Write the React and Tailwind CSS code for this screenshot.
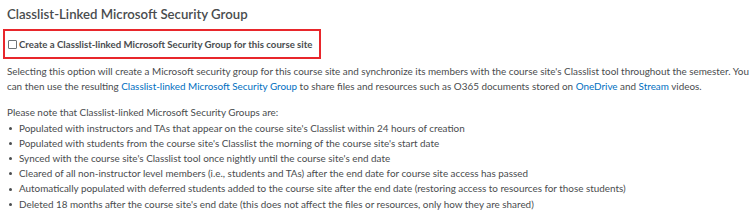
const bullets = [
  "Populated with instructors and TAs that appear on the course site's Classlist within 24 hours of creation",
  "Populated with students from the course site's Classlist the morning of the course site's start date",
  "Synced with the course site's Classlist tool once nightly until the course site's end date",
  'Cleared of all non-instructor level members (i.e., students and TAs) after the end date for course site access has passed',
  'Automatically populated with deferred students added to the course site after the end date (restoring access to resources for those students)',
  "Deleted 18 months after the course site's end date (this does not affect the files or resources, only how they are shared)",
]

export default function App() {
  return (
    <div className="h-[213px] overflow-hidden bg-white pl-[7px] pt-[3px] font-['Lato',sans-serif] text-[#494c4e]">
      <h2 className="text-[13.2px] font-semibold leading-[22px] text-[#494c4e]">
        Classlist-Linked Microsoft Security Group
      </h2>
      <div className="mt-[4px] -ml-[4px] w-[318px] border-2 border-[#e8262b] px-[3px] py-[7px]">
        <label className="flex items-center gap-[2px] text-[9.65px] font-bold leading-[12px] whitespace-nowrap">
          <span className="inline-block h-[9px] w-[9px] shrink-0 rounded-[1px] border border-[#6e7376] bg-white" />
          Create a Classlist-linked Microsoft Security Group for this course site
        </label>
      </div>
      <p className="mt-[5px] text-[9.9px] leading-[15.2px]">
        Selecting this option will create a Microsoft security group for this course site and synchronize its members with the course site's Classlist tool throughout the semester. You
        <br />
        can then use the resulting{' '}
        <a className="text-[#006fbf]">Classlist-linked Microsoft Security Group</a> to share files and resources such as O365 documents stored on{' '}
        <a className="text-[#006fbf]">OneDrive</a> and <a className="text-[#006fbf]">Stream</a> videos.
      </p>
      <p className="mt-[11px] text-[9.9px] leading-[15.2px]">Please note that Classlist-linked Microsoft Security Groups are:</p>
      <ul className="text-[9.9px] leading-[15.2px]">
        {bullets.map((b) => (
          <li key={b} className="flex items-center">
            <span className="ml-[2px] mr-[7px] inline-block h-[3px] w-[3px] shrink-0 rounded-full bg-[#494c4e]" />
            {b}
          </li>
        ))}
      </ul>
    </div>
  )
}
